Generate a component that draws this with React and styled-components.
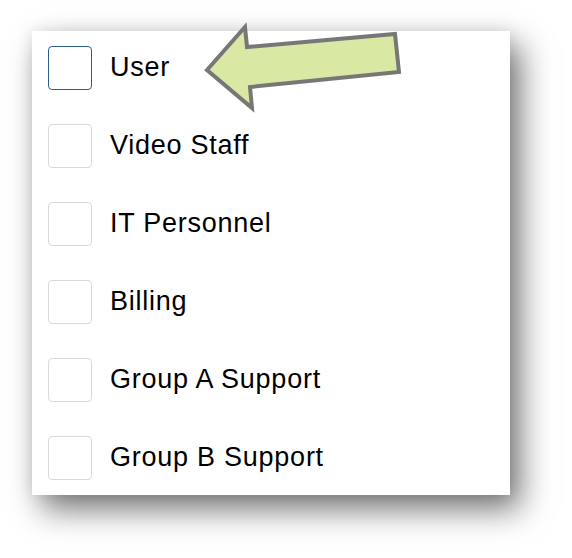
import React from "react";
import styled, { createGlobalStyle } from "styled-components";

const Global = createGlobalStyle`
  html, body { margin: 0; padding: 0; background: #fff; }
  body { font-family: "Liberation Sans", Arial, Helvetica, sans-serif; }
`;

const Page = styled.div`
  position: relative;
  width: 572px;
  height: 558px;
  padding: 31px 0 0 32px;
  box-sizing: border-box;
`;

const Card = styled.ul`
  list-style: none;
  margin: 0;
  width: 478px;
  box-sizing: border-box;
  padding: 15px 16px;
  background: #fff;
  display: flex;
  flex-direction: column;
  gap: 34px;
  box-shadow: 10px 14px 30px rgba(0, 0, 0, 0.55), 0 0 14px rgba(0, 0, 0, 0.08);
`;

const Row = styled.li`
  display: flex;
  align-items: center;
  gap: 18px;
  height: 44px;
`;

const Box = styled.span`
  width: 44px;
  height: 44px;
  box-sizing: border-box;
  border-radius: 4px;
  border: ${(p) => (p.$focused ? "1.8px solid #2c5c8c" : "1.6px solid #d9d9d9")};
  background: #fff;
  flex: none;
`;

const Label = styled.span`
  font-size: 27px;
  letter-spacing: 0.75px;
  color: #000;
  line-height: 1;
  margin-top: -1px;
`;

const Arrow = styled.svg`
  position: absolute;
  left: 0;
  top: 0;
  pointer-events: none;
`;

const items = ["User", "Video Staff", "IT Personnel", "Billing", "Group A Support", "Group B Support"];

export default function App() {
  return (
    <Page>
      <Global />
      <Card>
        {items.map((t, i) => (
          <Row key={t}>
            <Box $focused={i === 0} />
            <Label>{t}</Label>
          </Row>
        ))}
      </Card>
      <Arrow width="572" height="558" viewBox="0 0 572 558">
        <polygon
          points="207,70 245,27 247,47 395,34 399,72 250,87 252,108"
          fill="#d9e8a3"
          stroke="#777"
          strokeWidth="4"
          strokeLinejoin="miter"
        />
      </Arrow>
    </Page>
  );
}
